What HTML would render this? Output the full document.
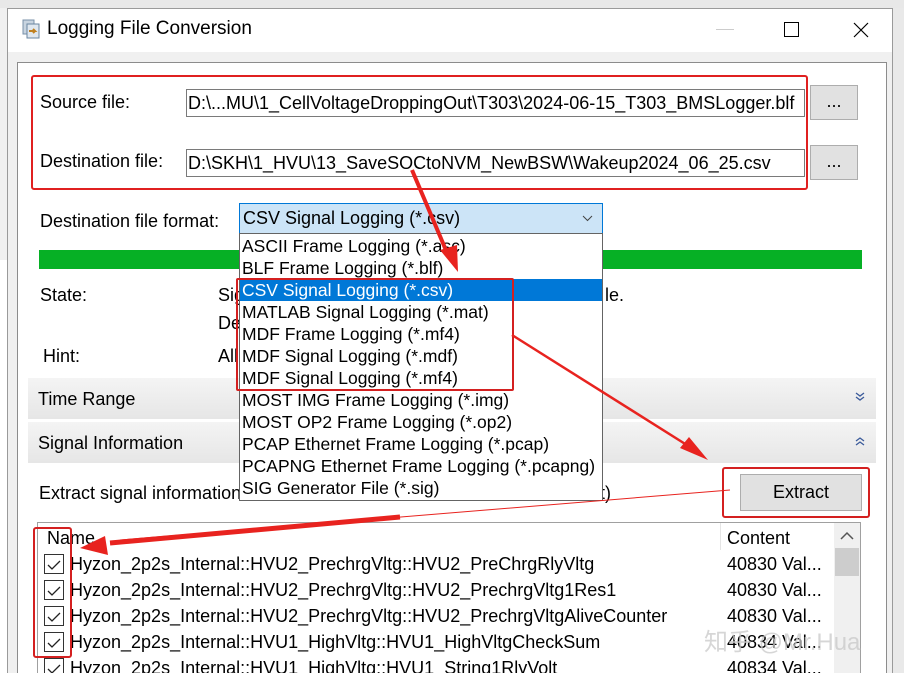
<!DOCTYPE html>
<html><head><meta charset="utf-8"><style>
*{box-sizing:border-box;margin:0;padding:0}
html,body{width:904px;height:673px;overflow:hidden}
body{background:#f0f0f0;font-family:"Liberation Sans",Arial,sans-serif;font-size:18px;color:#000;position:relative}
.a{position:absolute;white-space:nowrap}
.tb{position:absolute;background:#fff;border:1px solid #7a7a7a;padding:0 0 0 1px;line-height:26px;overflow:hidden}
.btn{position:absolute;background:#e1e1e1;border:1px solid #adadad;text-align:center}
.bar{position:absolute;left:28px;width:848px;height:41px;background:linear-gradient(#f4f4f4,#e6e6e6);}
.it{position:absolute;left:240px;width:362px;height:22px;line-height:22px;padding-left:2px;font-size:17.5px}
.row{position:absolute;left:44px;height:26px;line-height:26px}
.cb{position:absolute;left:0;top:3px;width:20px;height:20px;border:1px solid #333;background:#fff}
.row span{position:absolute;left:26px}
.ct{position:absolute;left:727px}
</style></head><body>
<div class="a" style="left:0;top:0;width:904px;height:8px;background:#e8e8e8"></div>
<div class="a" style="left:0;top:260px;width:7px;height:413px;background:#fff"></div>
<div class="a" style="left:893px;top:8px;width:11px;height:665px;background:#e9e9e9"></div>
<div class="a" style="left:7px;top:8px;width:886px;height:665px;background:#f0f0f0;border:1px solid #9a9a9a;border-bottom:none"></div>
<div class="a" style="left:8px;top:9px;width:884px;height:43px;background:#fff"></div>
<svg class="a" style="left:21px;top:19px" width="20" height="20"><rect x="2" y="1" width="11" height="14" fill="#c8d4e0" stroke="#7890a8"/><rect x="6" y="5" width="12" height="14" fill="#dfe7ef" stroke="#6a86a0"/><path d="M8 12h6l-2-2M14 12l-2 2" stroke="#c08020" stroke-width="2" fill="none"/></svg>
<div class="a" style="left:47px;top:18px;font-size:19px">Logging File Conversion</div>
<div class="a" style="left:716px;top:29px;width:18px;height:1px;background:#ccc"></div>
<div class="a" style="left:784px;top:22px;width:15px;height:15px;border:1px solid #000"></div>
<svg class="a" style="left:853px;top:22px" width="16" height="16"><path d="M1 1L15 15M15 1L1 15" stroke="#000" stroke-width="1.2"/></svg>
<div class="a" style="left:17px;top:62px;width:870px;height:611px;background:#fff;border:1px solid #8c8c8c;border-bottom:none"></div>
<div class="a" style="left:31px;top:75px;width:777px;height:115px;border:2px solid #e02020;border-radius:3px"></div>
<div class="a" style="left:40px;top:92px">Source file:</div>
<div class="tb" style="left:186px;top:89px;width:619px;height:28px">D:\...MU\1_CellVoltageDroppingOut\T303\2024-06-15_T303_BMSLogger.blf</div>
<div class="btn" style="left:810px;top:85px;width:48px;height:35px;line-height:30px">...</div>
<div class="a" style="left:40px;top:151px">Destination file:</div>
<div class="tb" style="left:186px;top:149px;width:619px;height:28px">D:\SKH\1_HVU\13_SaveSOCtoNVM_NewBSW\Wakeup2024_06_25.csv</div>
<div class="btn" style="left:810px;top:145px;width:48px;height:35px;line-height:30px">...</div>
<div class="a" style="left:40px;top:211px">Destination file format:</div>
<div class="a" style="left:239px;top:203px;width:364px;height:31px;background:#cce4f7;border:1px solid #0078d7;padding-left:3px;line-height:29px">CSV Signal Logging (*.csv)<svg style="position:absolute;right:9px;top:11px" width="11" height="7"><path d="M1 1l4.5 4.5L10 1" stroke="#444" fill="none"/></svg></div>
<div class="a" style="left:39px;top:250px;width:823px;height:19px;background:#06b025"></div>
<div class="a" style="left:40px;top:285px">State:</div>
<div class="a" style="left:218px;top:285px">Sig</div>
<div class="a" style="left:218px;top:313px">De</div>
<div class="a" style="left:605px;top:285px">le.</div>
<div class="a" style="left:43px;top:346px">Hint:</div>
<div class="a" style="left:218px;top:346px">All</div>
<div class="bar" style="top:378px"></div>
<div class="a" style="left:38px;top:389px">Time Range</div>
<svg class="a" style="left:855px;top:392px" width="10" height="10"><path d="M1 1l4 3 4-3M1 5l4 3 4-3" stroke="#3a5a9a" stroke-width="1.3" fill="none"/></svg>
<div class="bar" style="top:422px"></div>
<div class="a" style="left:38px;top:433px">Signal Information</div>
<svg class="a" style="left:855px;top:436px" width="10" height="10"><path d="M1 5l4-3 4 3M1 9l4-3 4 3" stroke="#3a5a9a" stroke-width="1.3" fill="none"/></svg>
<div class="a" style="left:39px;top:483px">Extract signal information</div>
<div class="a" style="left:600px;top:483px">t)</div>
<div class="a" style="left:722px;top:467px;width:148px;height:51px;border:2px solid #d42020;border-radius:3px"></div>
<div class="btn" style="left:740px;top:474px;width:122px;height:37px;line-height:35px">Extract</div>
<div class="a" style="left:37px;top:522px;width:824px;height:151px;border:1px solid #a0a0a0;border-bottom:none;background:#fff"></div>
<div class="a" style="left:720px;top:523px;width:1px;height:27px;background:#e5e5e5"></div>
<div class="a" style="left:47px;top:528px">Name</div>
<div class="a" style="left:727px;top:528px">Content</div>
<div class="a" style="left:834px;top:523px;width:26px;height:150px;background:#f0f0f0"></div>
<svg class="a" style="left:840px;top:531px" width="14" height="10"><path d="M1 8l6-6 6 6" stroke="#555" stroke-width="1.5" fill="none"/></svg>
<div class="a" style="left:835px;top:548px;width:24px;height:28px;background:#cdcdcd"></div>
<div class="row" style="top:551px"><div class="cb"><svg width="18" height="18"><path d="M3 9l4 4 8-8" stroke="#222" fill="none" stroke-width="1.3"/></svg></div><span>Hyzon_2p2s_Internal::HVU2_PrechrgVltg::HVU2_PreChrgRlyVltg</span></div>
<div class="row" style="top:577px"><div class="cb"><svg width="18" height="18"><path d="M3 9l4 4 8-8" stroke="#222" fill="none" stroke-width="1.3"/></svg></div><span>Hyzon_2p2s_Internal::HVU2_PrechrgVltg::HVU2_PrechrgVltg1Res1</span></div>
<div class="row" style="top:603px"><div class="cb"><svg width="18" height="18"><path d="M3 9l4 4 8-8" stroke="#222" fill="none" stroke-width="1.3"/></svg></div><span>Hyzon_2p2s_Internal::HVU2_PrechrgVltg::HVU2_PrechrgVltgAliveCounter</span></div>
<div class="row" style="top:629px"><div class="cb"><svg width="18" height="18"><path d="M3 9l4 4 8-8" stroke="#222" fill="none" stroke-width="1.3"/></svg></div><span>Hyzon_2p2s_Internal::HVU1_HighVltg::HVU1_HighVltgCheckSum</span></div>
<div class="row" style="top:655px"><div class="cb"><svg width="18" height="18"><path d="M3 9l4 4 8-8" stroke="#222" fill="none" stroke-width="1.3"/></svg></div><span>Hyzon_2p2s_Internal::HVU1_HighVltg::HVU1_String1RlyVolt</span></div>
<div class="ct a" style="top:554px">40830 Val...</div>
<div class="ct a" style="top:580px">40830 Val...</div>
<div class="ct a" style="top:606px">40830 Val...</div>
<div class="ct a" style="top:632px">40834 Val...</div>
<div class="ct a" style="top:658px">40834 Val...</div>
<div class="a" style="left:33px;top:527px;width:39px;height:131px;border:2px solid #d42020;border-radius:3px"></div>
<div class="a" style="left:239px;top:233px;width:364px;height:268px;background:#fff;border:1px solid #646464"></div>
<div class="it" style="top:235px">ASCII Frame Logging (*.asc)</div>
<div class="it" style="top:257px">BLF Frame Logging (*.blf)</div>
<div class="it" style="top:279px;background:#0078d7;color:#fff">CSV Signal Logging (*.csv)</div>
<div class="it" style="top:301px">MATLAB Signal Logging (*.mat)</div>
<div class="it" style="top:323px">MDF Frame Logging (*.mf4)</div>
<div class="it" style="top:345px">MDF Signal Logging (*.mdf)</div>
<div class="it" style="top:367px">MDF Signal Logging (*.mf4)</div>
<div class="it" style="top:389px">MOST IMG Frame Logging (*.img)</div>
<div class="it" style="top:411px">MOST OP2 Frame Logging (*.op2)</div>
<div class="it" style="top:433px">PCAP Ethernet Frame Logging (*.pcap)</div>
<div class="it" style="top:455px">PCAPNG Ethernet Frame Logging (*.pcapng)</div>
<div class="it" style="top:477px">SIG Generator File (*.sig)</div>
<div class="a" style="left:236px;top:278px;width:278px;height:113px;border:2px solid #d42020;border-radius:2px"></div>
<svg class="a" style="left:0;top:0" width="904" height="673">
<path d="M412 170L448 255" stroke="#e8231f" stroke-width="4"/><path d="M440 250L458 272L457 245Z" fill="#e8231f"/>
<path d="M512 335L690 447" stroke="#e8231f" stroke-width="2.5"/><path d="M680 448L708 460L689 437Z" fill="#e8231f"/>
<path d="M730 490L120 540" stroke="#e8231f" stroke-width="1"/><path d="M400 517L110 543" stroke="#e8231f" stroke-width="5"/><path d="M105 536L80 548L108 555Z" fill="#e8231f"/>
</svg>
<div class="a" style="left:704px;top:622px;font-size:24px;color:rgba(200,200,200,0.75);font-family:'Liberation Sans','Noto Sans CJK SC',sans-serif">知乎 @Mr.Hua</div>
</body></html>
